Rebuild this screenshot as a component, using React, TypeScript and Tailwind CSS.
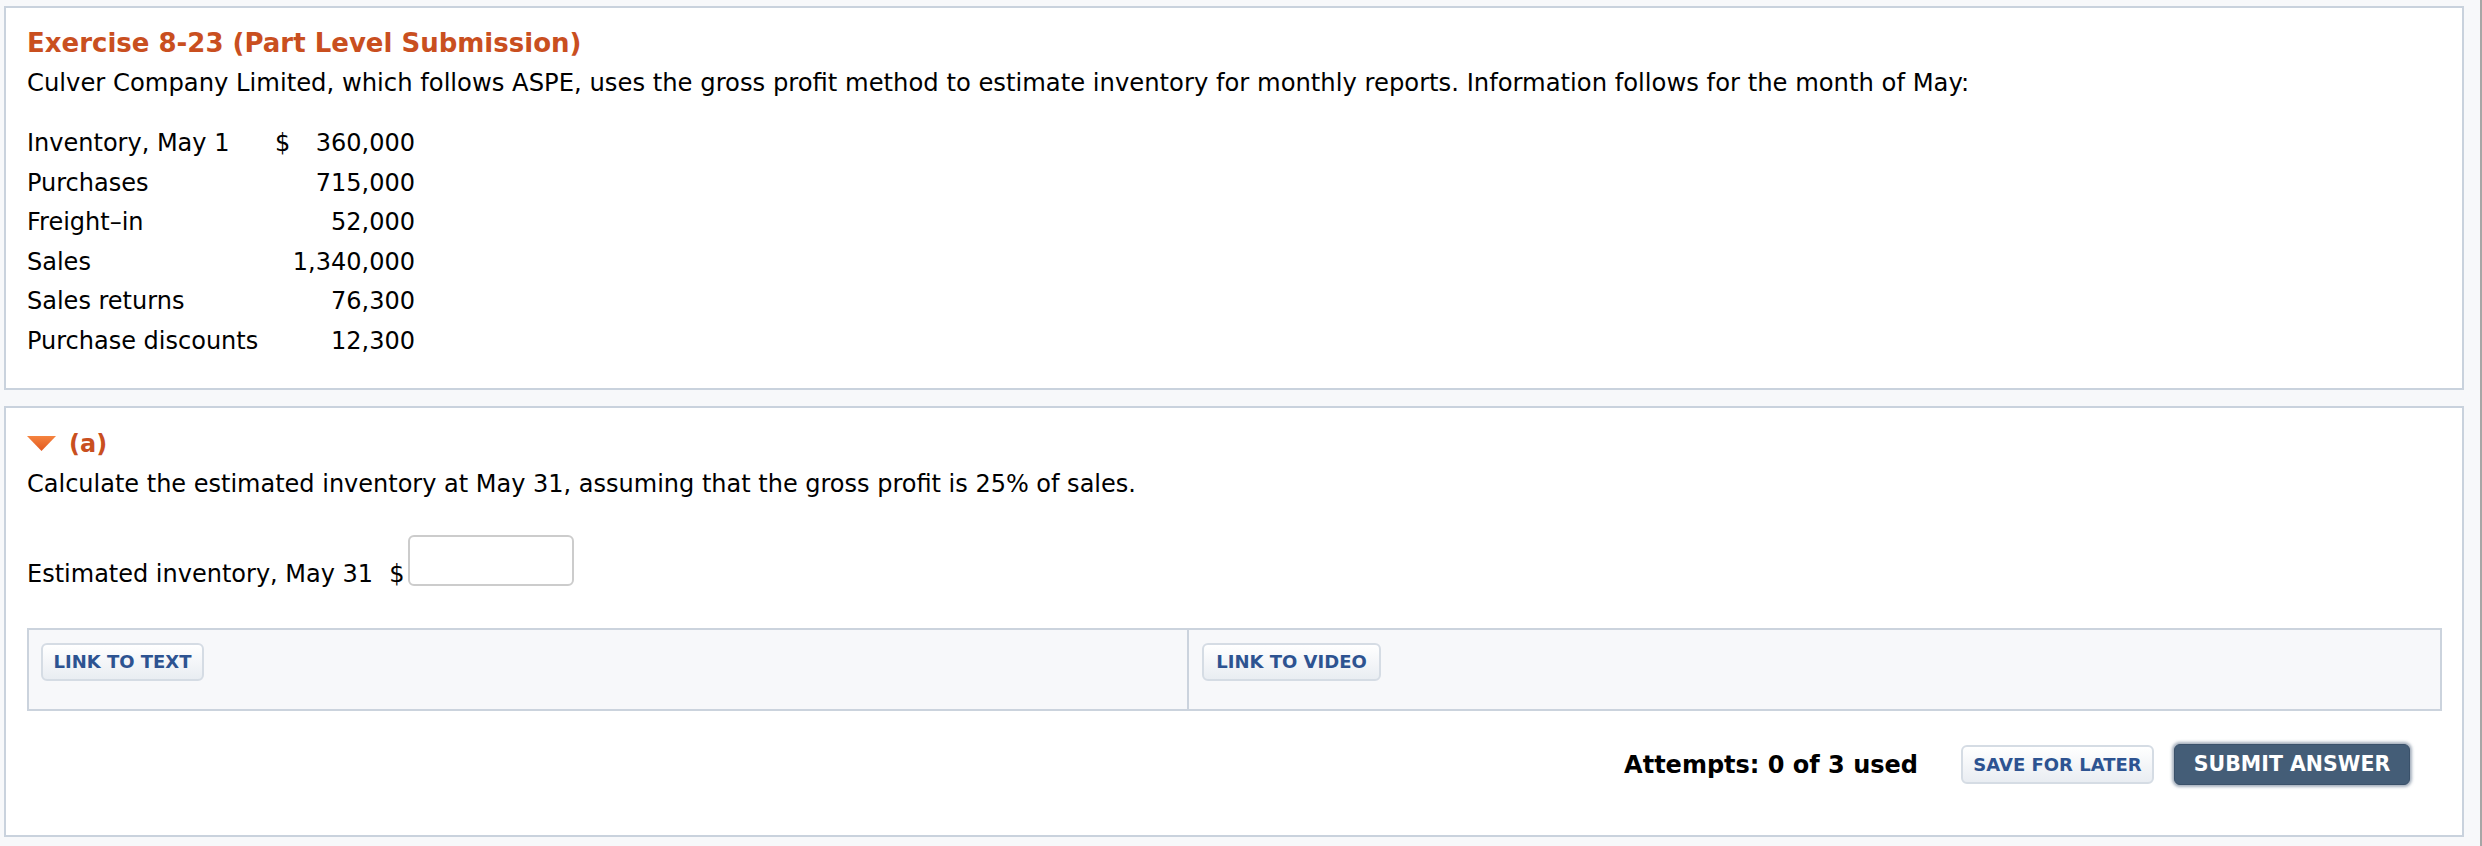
const rows = [
  { label: "Inventory, May 1", sign: "$", amount: "360,000" },
  { label: "Purchases", sign: "", amount: "715,000" },
  { label: "Freight\u2013in", sign: "", amount: "52,000" },
  { label: "Sales", sign: "", amount: "1,340,000" },
  { label: "Sales returns", sign: "", amount: "76,300" },
  { label: "Purchase discounts", sign: "", amount: "12,300" },
];

function LinkButton({ label, width }: { label: string; width: string }) {
  return (
    <button
      className={`${width} flex h-[38px] items-center justify-center rounded-[6px] border-2 border-[#d5dce4] bg-gradient-to-b from-white to-[#e9edf2] text-[18px] font-bold text-[#2d5391]`}
    >
      {label}
    </button>
  );
}

function Triangle() {
  return (
    <svg width="29" height="15" viewBox="0 0 29 15">
      <defs>
        <linearGradient id="tri" x1="0" y1="0" x2="0" y2="1">
          <stop offset="0" stopColor="#f5843f" />
          <stop offset="1" stopColor="#e2581f" />
        </linearGradient>
      </defs>
      <path d="M0 0 H29 L14.5 15 Z" fill="url(#tri)" />
    </svg>
  );
}

export default function App() {
  return (
    <div className="min-h-[846px] w-[2482px] border-r-2 border-[#a6a6a6] bg-[#f7f8fa] pt-[6px] font-['DejaVu_Sans',Verdana,sans-serif] text-[24px] text-black">
      {/* problem statement */}
      <div className="ml-[4px] w-[2460px] border-2 border-[#c9d2dd] bg-white pb-[26px] pl-[21px] pr-[20px] pt-[20px]">
        <div className="text-[26px] font-bold leading-[30px] text-[#c94f1f]">
          Exercise 8-23 (Part Level Submission)
        </div>
        <p className="mt-[10px] text-[24.25px] leading-[30px]">
          Culver Company Limited, which follows ASPE, uses the gross profit method to estimate inventory for
          monthly reports. Information follows for the month of May:
        </p>
        <div className="mt-[26px]">
          {rows.map((r) => (
            <div key={r.label} className="grid h-[39.6px] grid-cols-[248px_16px_124px] leading-[39.6px]">
              <span>{r.label}</span>
              <span>{r.sign}</span>
              <span className="text-right">{r.amount}</span>
            </div>
          ))}
        </div>
      </div>

      {/* part (a) */}
      <div className="ml-[4px] mt-[16px] w-[2460px] border-2 border-[#c9d2dd] bg-white pb-[47px] pl-[21px] pr-[20px] pt-[21px]">
        <div className="flex items-center leading-[30px]">
          <Triangle />
          <span className="ml-[13px] font-bold text-[#c94f1f]">(a)</span>
        </div>
        <p className="mt-[10px] leading-[30px]">
          Calculate the estimated inventory at May 31, assuming that the gross profit is 25% of sales.
        </p>
        <div className="mt-[36px] flex items-end leading-[24px]">
          <span>Estimated inventory, May 31</span>
          <span className="ml-[16px]">$</span>
          <input
            type="text"
            className="ml-[4px] h-[51px] w-[166px] rounded-[6px] border-2 border-[#cccccc] bg-white outline-none"
          />
        </div>

        <div className="mt-[42px] grid grid-cols-[1160px_1fr] border-2 border-[#cbd3dd] bg-[#f7f8fa]">
          <div className="h-[79px] border-r-2 border-[#cbd3dd] pl-[12px] pt-[13px]">
            <LinkButton label="LINK TO TEXT" width="w-[163px]" />
          </div>
          <div className="h-[79px] pl-[13px] pt-[13px]">
            <LinkButton label="LINK TO VIDEO" width="w-[179px]" />
          </div>
        </div>

        <div className="mt-[31px] flex h-[46px] items-center justify-end pr-[32px]">
          <span className="mr-[43px] font-bold">Attempts: 0 of 3 used</span>
          <button className="flex h-[39px] w-[193px] items-center justify-center rounded-[6px] border-2 border-[#d5dce4] bg-gradient-to-b from-white to-[#e9edf2] text-[18px] font-bold text-[#2d5391]">
            SAVE FOR LATER
          </button>
          <button className="ml-[20px] flex h-[41px] w-[236px] items-center justify-center rounded-[6px] border border-[#3a516a] bg-[#445d77] text-[20.5px] font-bold text-white shadow-[0_0_3px_2px_rgba(90,110,135,0.55)]">
            SUBMIT ANSWER
          </button>
        </div>
      </div>
    </div>
  );
}
